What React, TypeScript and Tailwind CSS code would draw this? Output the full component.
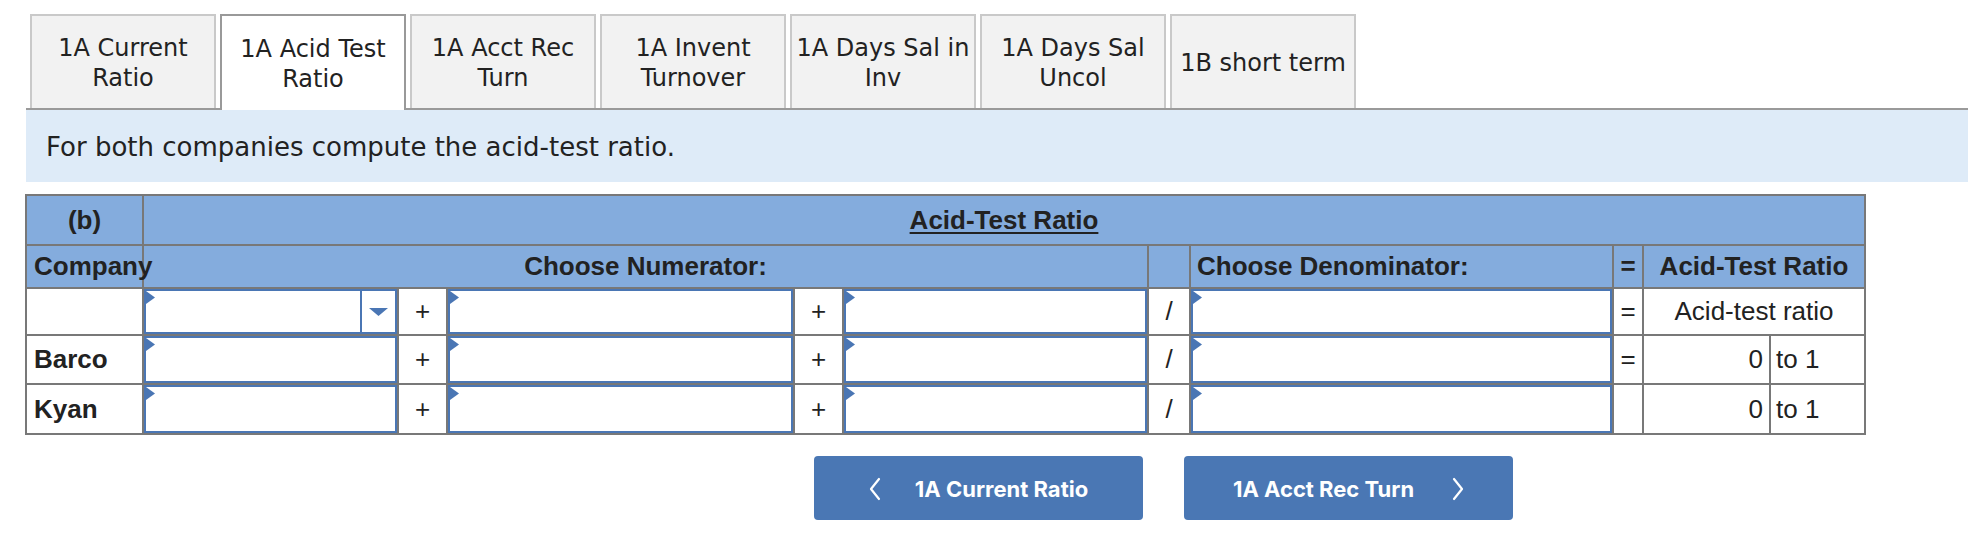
const tabs: { lines: string[]; active?: boolean }[] = [
    { lines: ['1A Current', 'Ratio'] },
    { lines: ['1A Acid Test', 'Ratio'], active: true },
    { lines: ['1A Acct Rec', 'Turn'] },
    { lines: ['1A Invent', 'Turnover'] },
    { lines: ['1A Days Sal in', 'Inv'] },
    { lines: ['1A Days Sal', 'Uncol'] },
    { lines: ['1B short term'] },
];

function Marker() {
    return (
        <svg className="absolute left-0 top-0" width="9" height="13" viewBox="0 0 9 13">
            <polygon points="0,0 9,6.5 0,13" fill="#4a76b4" />
        </svg>
    );
}

function Field({ dropdown = false }: { dropdown?: boolean }) {
    return (
        <div className="relative flex h-full w-full border-2 border-[#4a76b4] bg-white">
            <Marker />
            {dropdown && (
                <div className="ml-auto flex h-full w-[35px] items-center justify-center border-l-2 border-[#4a76b4]">
                    <svg width="19" height="8" viewBox="0 0 19 8">
                        <polygon points="0,0 19,0 9.5,8" fill="#4a76b4" />
                    </svg>
                </div>
            )}
        </div>
    );
}

function Chevron({ dir }: { dir: 'left' | 'right' }) {
    return (
        <svg width="12" height="24" viewBox="0 0 12 24">
            <polyline
                points={dir === 'left' ? '10,2 2,12 10,22' : '2,2 10,12 2,22'}
                fill="none"
                stroke="white"
                strokeWidth="2.2"
                strokeLinecap="round"
                strokeLinejoin="round"
            />
        </svg>
    );
}

const cell = 'bg-white flex items-center';
const head = 'bg-[#84acdd] flex items-center font-bold text-[#222]';

export default function App() {
    return (
        <div className="min-h-[556px] bg-white pl-[25px] pt-[14px] font-['Liberation_Sans',Arial,sans-serif]">
            <div className="ml-[5px] flex items-end gap-[4px] font-['DejaVu_Sans',Verdana,sans-serif] text-[24px] leading-[30px] text-[#222]">
                {tabs.map((t) => (
                    <div
                        key={t.lines.join(' ')}
                        className={`flex w-[186px] flex-col items-center justify-center border-2 border-b-0 pt-[2px] text-center ${
                            t.active
                                ? 'relative z-10 -mb-[2px] h-[96px] border-[#999] bg-white'
                                : 'h-[94px] border-[#c9c9c9] bg-[#f2f2f2]'
                        }`}
                    >
                        {t.lines.map((l) => (
                            <span key={l} className="whitespace-nowrap">{l}</span>
                        ))}
                    </div>
                ))}
            </div>

            <div className="ml-[1px] flex h-[74px] items-center border-t-2 border-[#9a9a9a] bg-[#deebf8] pl-[20px] pt-[3px] font-['DejaVu_Sans',Verdana,sans-serif] text-[26px] text-[#222]">
                For both companies compute the acid-test ratio.
            </div>

            <div className="mt-[12px] grid w-fit grid-cols-[115px_253px_47px_345px_47px_303px_40px_421px_28px_125px_93px] grid-rows-[48px_41px_45px_47px_48px] gap-[2px] bg-[#787878] p-[2px] text-[26px] text-[#222]">
                <div className={`${head} justify-center`}>(b)</div>
                <div className={`${head} col-span-10 justify-center`}>
                    <span className="underline underline-offset-[3px]">Acid-Test Ratio</span>
                </div>

                <div className={`${head} relative z-10 overflow-visible whitespace-nowrap pl-[7px]`}>Company</div>
                <div className={`${head} col-span-5 justify-center`}>Choose Numerator:</div>
                <div className={head}></div>
                <div className={`${head} pl-[6px]`}>Choose Denominator:</div>
                <div className={`${head} justify-center`}>=</div>
                <div className={`${head} col-span-2 justify-center`}>Acid-Test Ratio</div>

                <div className={cell}></div>
                <div className={cell}><Field dropdown /></div>
                <div className={`${cell} justify-center`}>+</div>
                <div className={cell}><Field /></div>
                <div className={`${cell} justify-center`}>+</div>
                <div className={cell}><Field /></div>
                <div className={`${cell} justify-center`}>/</div>
                <div className={cell}><Field /></div>
                <div className={`${cell} justify-center`}>=</div>
                <div className={`${cell} col-span-2 justify-center`}>Acid-test ratio</div>

                {['Barco', 'Kyan'].map((name) => (
                    <div key={name} className="contents">
                        <div className={`${cell} pl-[7px] font-bold`}>{name}</div>
                        <div className={cell}><Field /></div>
                        <div className={`${cell} justify-center`}>+</div>
                        <div className={cell}><Field /></div>
                        <div className={`${cell} justify-center`}>+</div>
                        <div className={cell}><Field /></div>
                        <div className={`${cell} justify-center`}>/</div>
                        <div className={cell}><Field /></div>
                        <div className={`${cell} justify-center`}>{name === 'Barco' ? '=' : ''}</div>
                        <div className={`${cell} justify-end pr-[6px]`}>0</div>
                        <div className={`${cell} pl-[5px]`}>to 1</div>
                    </div>
                ))}
            </div>

            <div className="mt-[21px] flex gap-[41px] pl-[789px] font-['Inter',sans-serif] text-[22px] font-bold text-white">
                <button className="flex h-[64px] w-[329px] items-center justify-center gap-[34px] rounded-[4px] bg-[#4a77b4] pt-[2px]">
                    <Chevron dir="left" />
                    <span>1A Current Ratio</span>
                </button>
                <button className="flex h-[64px] w-[329px] items-center justify-center gap-[38px] rounded-[4px] bg-[#4a77b4] pt-[2px]">
                    <span>1A Acct Rec Turn</span>
                    <Chevron dir="right" />
                </button>
            </div>
        </div>
    );
}
